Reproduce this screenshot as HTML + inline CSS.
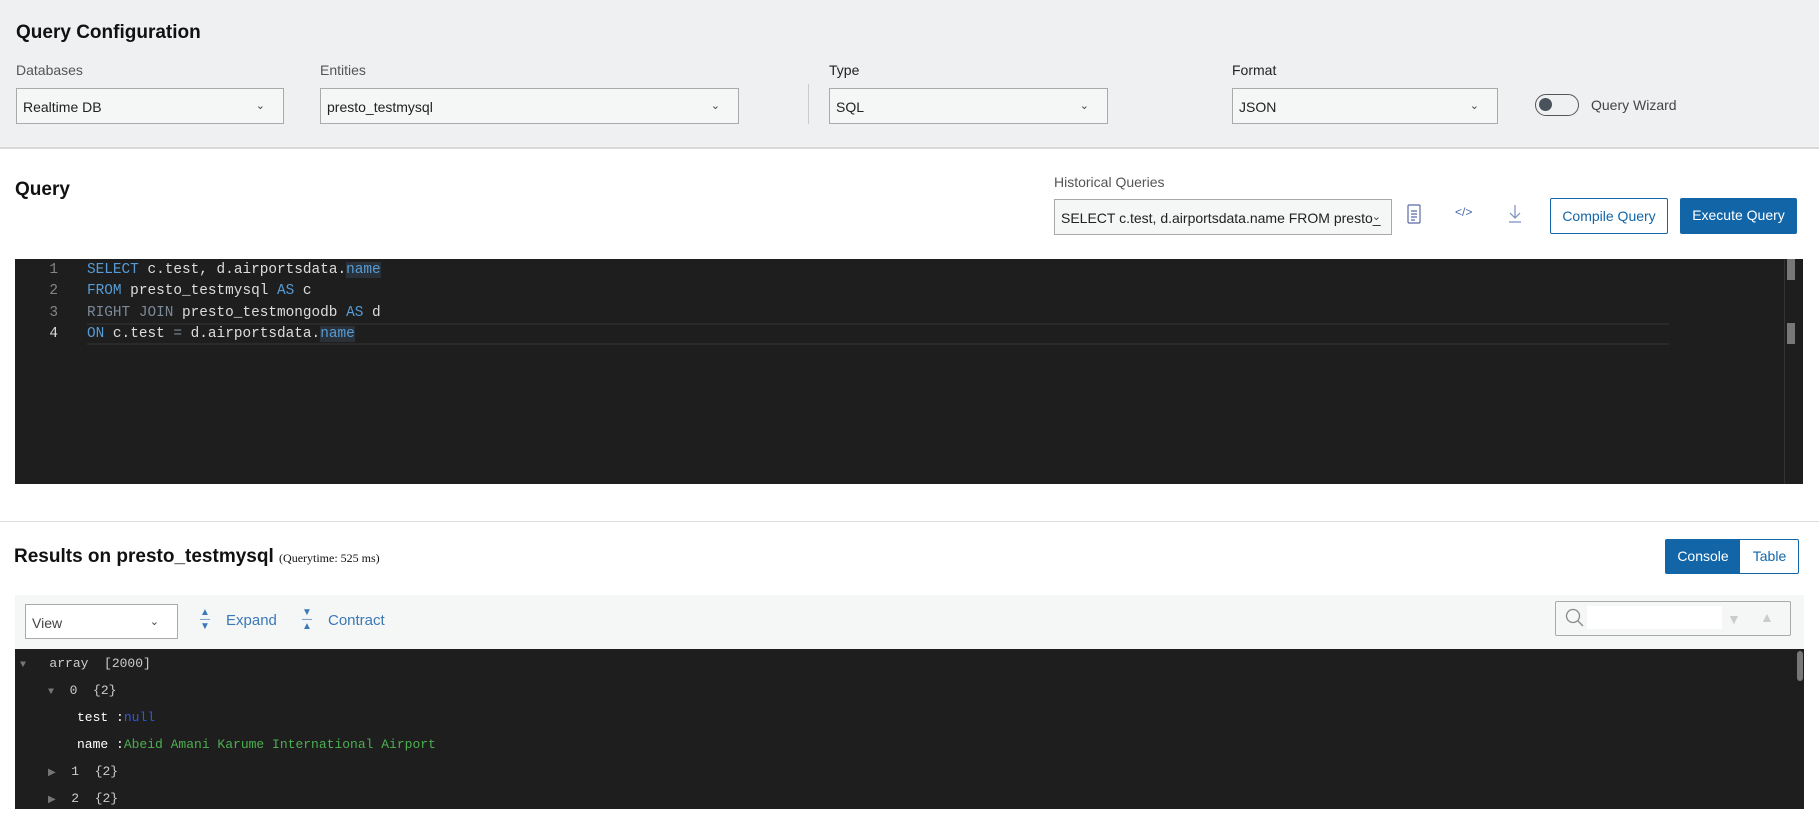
<!DOCTYPE html>
<html><head><meta charset="utf-8"><style>
*{box-sizing:border-box;margin:0;padding:0}
body{width:1819px;height:809px;overflow:hidden;background:#fff;font-family:"Liberation Sans",sans-serif;color:#222;position:relative}
.a{position:absolute}
.hdr{left:0;top:0;width:1819px;height:149px;background:#eff0f2;border-bottom:2px solid #d9d9d9}
.lbl{font-size:14px;color:#555}
.sel{background:#f5f6f6;border:1px solid #aaa;height:36px;font-size:14px;color:#222;padding:10px 6px;}
.chev{position:absolute;right:18px;top:10px;font-size:11px;color:#444}
.mono{font-family:"Liberation Mono",monospace;font-size:14.4px}
.kw{color:#569cd6}.kg{color:#7b8a99}
.btn{font-size:14px;height:36px;line-height:34px;text-align:center;border-radius:2px}
</style></head><body>
<div class="a hdr"></div>
<div class="a" style="left:16px;top:22px;font-size:19px;font-weight:bold;color:#111">Query Configuration</div>
<div class="a lbl" style="left:16px;top:62px">Databases</div>
<div class="a lbl" style="left:320px;top:62px">Entities</div>
<div class="a lbl" style="left:829px;top:62px;color:#222">Type</div>
<div class="a lbl" style="left:1232px;top:62px;color:#222">Format</div>
<div class="a sel" style="left:16px;top:88px;width:268px">Realtime DB<span class="chev">&#8964;</span></div>
<div class="a sel" style="left:320px;top:88px;width:419px">presto_testmysql<span class="chev">&#8964;</span></div>
<div class="a" style="left:808px;top:84px;width:1px;height:40px;background:#ccc"></div>
<div class="a sel" style="left:829px;top:88px;width:279px">SQL<span class="chev">&#8964;</span></div>
<div class="a sel" style="left:1232px;top:88px;width:266px">JSON<span class="chev">&#8964;</span></div>
<div class="a" style="left:1535px;top:94px;width:44px;height:22px;border:1.5px solid #555;border-radius:11px;background:#eff0f2"><div style="position:absolute;left:3px;top:3px;width:13px;height:13px;border-radius:50%;background:#4a535b"></div></div>
<div class="a" style="left:1591px;top:97px;font-size:14px;color:#444">Query Wizard</div>

<div class="a" style="left:15px;top:179px;font-size:19px;font-weight:bold;color:#111">Query</div>
<div class="a lbl" style="left:1054px;top:174px">Historical Queries</div>
<div class="a sel" style="left:1054px;top:199px;width:338px;white-space:nowrap;overflow:hidden">SELECT c.test, d.airportsdata.name FROM presto_<span class="chev" style="right:10px">&#8964;</span></div>
<svg class="a" style="left:1406px;top:204px" width="16" height="20" viewBox="0 0 16 20" fill="none" stroke="#5a6aa8" stroke-width="1.2"><rect x="2" y="1" width="12" height="18" rx="1"/><path d="M5 7h6M5 10h6M5 13h6M5 16h4"/></svg>
<div class="a" style="left:1455px;top:205px;font-size:12px;color:#4a6aa8">&lt;/&gt;</div>
<svg class="a" style="left:1507px;top:204px" width="16" height="20" viewBox="0 0 16 20" fill="none" stroke="#7a8fc0" stroke-width="1.2"><path d="M8 1v13M3 9l5 5 5-5M2 18h12"/></svg>
<div class="a btn" style="left:1550px;top:198px;width:118px;border:1px solid #1266a8;color:#1266a8;background:#fff">Compile Query</div>
<div class="a btn" style="left:1680px;top:198px;width:117px;background:#1266a8;color:#fff">Execute Query</div>

<div class="a" style="left:15px;top:259px;width:1788px;height:225px;background:#1e1e1e"></div>
<div class="a" style="left:87px;top:323px;width:1582px;height:22px;border-top:2px solid #2a2a2a;border-bottom:2px solid #2a2a2a"></div>
<div class="a" style="left:1787px;top:259px;width:8px;height:21px;background:#777"></div>
<div class="a" style="left:1787px;top:323px;width:8px;height:21px;background:#777"></div>
<div class="a" style="left:1784px;top:259px;width:1px;height:225px;background:#333"></div>
<div class="a mono" style="left:0;top:260px;line-height:21.3px;color:#858585;width:58px;text-align:right">1<br>2<br>3<br><span style="color:#ddd">4</span></div>
<div class="a mono" style="left:87px;top:260px;line-height:21.3px;color:#ddd;white-space:pre"><span class="kw">SELECT</span> c.test, d.airportsdata.<span class="kw" style="background:#2a3138">name</span>
<span class="kw">FROM</span> presto_testmysql <span class="kw">AS</span> c
<span class="kg">RIGHT JOIN</span> presto_testmongodb <span class="kw">AS</span> d
<span class="kw">ON</span> c.test <span class="kg">=</span> d.airportsdata.<span class="kw" style="background:#2a3138">name</span></div>

<div class="a" style="left:0;top:521px;width:1819px;height:1px;background:#ddd"></div>
<div class="a" style="left:14px;top:546px;font-size:19px;font-weight:bold;color:#111">Results on presto_testmysql <span style="font-family:'Liberation Serif',serif;font-size:12px;font-weight:normal">(Querytime: 525 ms)</span></div>
<div class="a" style="left:1665px;top:539px;width:134px;height:35px;border:1px solid #1266a8;border-radius:2px;font-size:14px;line-height:33px"><span style="position:absolute;left:0;top:0;width:74px;height:33px;background:#1266a8;color:#fff;text-align:center">Console</span><span style="position:absolute;left:74px;width:59px;text-align:center;color:#1266a8">Table</span></div>

<div class="a" style="left:15px;top:595px;width:1789px;height:54px;background:#f5f6f6"></div>
<div class="a sel" style="left:25px;top:604px;width:153px;height:35px;background:#fff;color:#444">View<span class="chev">&#8964;</span></div>
<div class="a" style="left:200px;top:609px;font-size:10px;color:#3a78b8;line-height:7px">▲<br>—<br>▼</div>
<div class="a" style="left:226px;top:612px;font-size:15px;color:#3a78b8">Expand</div>
<div class="a" style="left:302px;top:609px;font-size:10px;color:#3a78b8;line-height:7px">▼<br>—<br>▲</div>
<div class="a" style="left:328px;top:612px;font-size:15px;color:#3a78b8">Contract</div>
<div class="a" style="left:1555px;top:601px;width:236px;height:35px;border:1px solid #aaa;border-radius:2px;background:#f5f6f6"></div>
<svg class="a" style="left:1565px;top:608px" width="20" height="20" viewBox="0 0 20 20" fill="none" stroke="#888" stroke-width="1.3"><circle cx="8" cy="8" r="6.5"/><path d="M13 13l5 5"/></svg>
<div class="a" style="left:1587px;top:606px;width:135px;height:23px;background:#fff"></div>
<div class="a" style="left:1727px;top:611px;font-size:14px;color:#ccc">▼</div>
<div class="a" style="left:1760px;top:609px;font-size:14px;color:#ccc">▲</div>

<div class="a" style="left:15px;top:649px;width:1789px;height:160px;background:#1e1e1e"></div>
<div class="a" style="left:1797px;top:651px;width:6px;height:30px;background:#777;border-radius:3px"></div>
<div class="a mono" style="left:0;top:650px;font-size:13px;line-height:27px;color:#ccc;white-space:pre">
<div style="position:absolute;left:20px;top:0;width:300px"><span style="font-size:10px;color:#777">▼</span>   array  [2000]</div>
<div style="position:absolute;left:48px;top:27px;width:300px"><span style="font-size:10px;color:#777">▼</span>  0  {2}</div>
<div style="position:absolute;left:77px;top:54px;width:300px;color:#fff">test :<span style="color:#2a5ae0">null</span></div>
<div style="position:absolute;left:77px;top:81px;width:500px;color:#fff">name :<span style="color:#4caf50">Abeid Amani Karume International Airport</span></div>
<div style="position:absolute;left:48px;top:108px;width:300px"><span style="font-size:10px;color:#777">▶</span>  1  {2}</div>
<div style="position:absolute;left:48px;top:135px;width:300px"><span style="font-size:10px;color:#777">▶</span>  2  {2}</div>
</div>
</body></html>
